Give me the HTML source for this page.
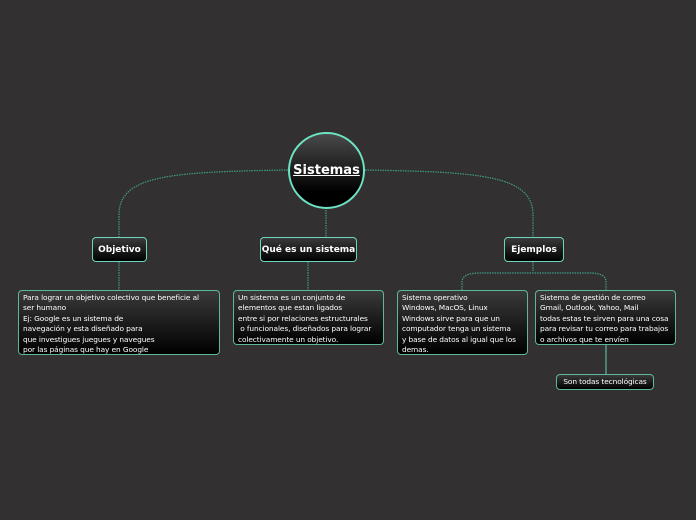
<!DOCTYPE html><html><head><meta charset="utf-8"><style>
body{margin:0;width:696px;height:520px;background:#323031;position:relative;overflow:hidden;font-family:"DejaVu Sans","Liberation Sans",sans-serif;color:#fff}
.b{position:absolute;box-sizing:border-box;border:1px solid #5bb89f;border-radius:4px;background:linear-gradient(#3a3a3a,#000)}
.n{font-size:9px;font-weight:600;display:flex;align-items:center;justify-content:center;border-color:#6ad6bd}
.t{font-size:7.4px;line-height:10.4px;padding:2px 4px;letter-spacing:-0.1px;white-space:nowrap;overflow:hidden}
</style></head><body>
<svg width="696" height="520" style="position:absolute;left:0;top:0">
<g fill="none" stroke="#3f9c86" stroke-width="1.2" stroke-dasharray="1.5,1">
<path d="M288 170 C170 172 119 175 119 215 L119 237"/>
<path d="M365 170 C480 172 533 175 533 215 L533 237"/>
<path d="M326 210 L326 237"/>
<path d="M119 262 V290"/><path d="M308 262 V290"/>
<path d="M533 262 V272 M462 290 V282 Q462 273 480 273 L590 273 Q606 273 606 282 V290"/>
</g>
<path d="M606 345 V374" stroke="#5bb89f" stroke-width="1.2"/>
</svg>
<div style="position:absolute;left:288px;top:132px;width:77px;height:77px;box-sizing:border-box;border:2px solid #6ee3c4;border-radius:50%;background:linear-gradient(#4a4a4a,#000 80%);display:flex;align-items:center;justify-content:center;font-weight:bold;font-size:13px;text-decoration:underline">Sistemas</div>
<div class="b n" style="left:92px;top:237px;width:55px;height:25px">Objetivo</div>
<div class="b n" style="left:260px;top:237px;width:97px;height:25px">Qué es un sistema</div>
<div class="b n" style="left:504px;top:237px;width:60px;height:25px">Ejemplos</div>
<div class="b t" style="left:18px;top:290px;width:202px;height:65px">Para lograr un objetivo colectivo que beneficie al<br>ser humano<br>Ej: Google es un sistema de<br>navegación y esta diseñado para<br>que investigues juegues y navegues<br>por las páginas que hay en Google</div>
<div class="b t" style="left:233px;top:290px;width:151px;height:55px">Un sistema es un conjunto de<br>elementos que estan ligados<br>entre si por relaciones estructurales<br>&nbsp;o funcionales, diseñados para lograr<br>colectivamente un objetivo.</div>
<div class="b t" style="left:397px;top:290px;width:131px;height:65px">Sistema operativo<br>Windows, MacOS, Linux<br>Windows sirve para que un<br>computador tenga un sistema<br>y base de datos al igual que los<br>demas.</div>
<div class="b t" style="left:535px;top:290px;width:141px;height:55px">Sistema de gestión de correo<br>Gmail, Outlook, Yahoo, Mail<br>todas estas te sirven para una cosa<br>para revisar tu correo para trabajos<br>o archivos que te envíen</div>
<div class="b t" style="left:556px;top:374px;width:98px;height:16px;display:flex;align-items:center;justify-content:center;padding:0">Son todas tecnológicas</div>
</body></html>
